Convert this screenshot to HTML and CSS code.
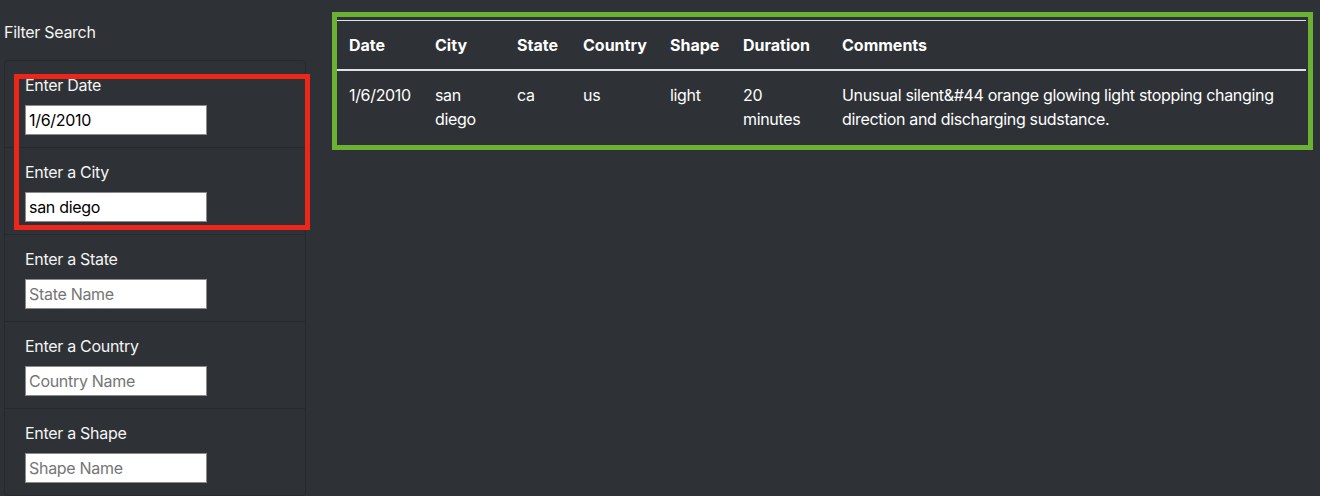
FILE: index.html
```html
<!DOCTYPE html>
<html lang="en">
<head>
<meta charset="utf-8">
<title>UFO Sightings</title>
<link rel="stylesheet" href="styles.css">
</head>
<body>
<div class="page">
  <aside class="sidebar">
    <h2 class="sidebar-title">Filter Search</h2>
    <ul class="filters">
      <li class="filter-item">
        <label class="filter-label" for="date">Enter Date</label>
        <input class="filter-input" id="date" type="text" value="1/6/2010" placeholder="1/1/2010">
      </li>
      <li class="filter-item">
        <label class="filter-label" for="city">Enter a City</label>
        <input class="filter-input" id="city" type="text" value="san diego" placeholder="City Name">
      </li>
      <li class="filter-item">
        <label class="filter-label" for="state">Enter a State</label>
        <input class="filter-input" id="state" type="text" placeholder="State Name">
      </li>
      <li class="filter-item">
        <label class="filter-label" for="country">Enter a Country</label>
        <input class="filter-input" id="country" type="text" placeholder="Country Name">
      </li>
      <li class="filter-item">
        <label class="filter-label" for="shape">Enter a Shape</label>
        <input class="filter-input" id="shape" type="text" placeholder="Shape Name">
      </li>
    </ul>
    <div class="highlight-red"></div>
  </aside>
  <main class="content">
    <div class="table-frame">
      <table class="ufo-table">
        <thead>
          <tr>
            <th class="c-date">Date</th>
            <th class="c-city">City</th>
            <th class="c-state">State</th>
            <th class="c-country">Country</th>
            <th class="c-shape">Shape</th>
            <th class="c-duration">Duration</th>
            <th class="c-comments">Comments</th>
          </tr>
        </thead>
        <tbody>
          <tr>
            <td>1/6/2010</td>
            <td>san diego</td>
            <td>ca</td>
            <td>us</td>
            <td>light</td>
            <td>20 minutes</td>
            <td>Unusual silent&amp;#44 orange glowing light stopping changing direction and discharging sudstance.</td>
          </tr>
        </tbody>
      </table>
    </div>
  </main>
</div>
</body>
</html>
```
FILE: styles.css
```css
* { box-sizing: border-box; }

html, body {
  margin: 0;
  padding: 0;
  background: #2e3236;
  color: #ffffff;
  font-family: "Inter", "Liberation Sans", sans-serif;
  font-size: 16px;
  line-height: 24px;
  height: 496px;
  overflow: hidden;
}

.page {
  display: flex;
  align-items: flex-start;
  padding-left: 4px;
}

.sidebar {
  position: relative;
  width: 302px;
  flex: 0 0 302px;
}

.sidebar-title {
  margin: 0;
  padding-top: 20px;
  margin-bottom: 16px;
  font-size: 16px;
  font-weight: normal;
  line-height: 24px;
  letter-spacing: -0.3px;
  color: #f4f4f4;
}

.filters {
  list-style: none;
  margin: 0;
  padding: 0;
  border: 1px solid #27292d;
  border-radius: 4px;
}

.filter-item {
  padding: 12px 20px;
  border-top: 1px solid #27292d;
}

.filter-item:first-child {
  border-top: none;
}

.filter-label {
  display: block;
  margin-bottom: 8px;
  line-height: 24px;
  letter-spacing: -0.3px;
  color: #f4f4f4;
}

.filter-input {
  display: block;
  width: 182px;
  height: 30px;
  margin: 0;
  padding: 0 3px;
  border: 1px solid #8a8a8a;
  background: #ffffff;
  color: #000000;
  font-family: inherit;
  font-size: 16px;
  letter-spacing: -0.3px;
  outline: none;
}

.filter-input::placeholder {
  color: #757575;
}

.highlight-red {
  position: absolute;
  left: 10px;
  top: 74px;
  width: 296px;
  height: 156px;
  border: 5px solid #ee2619;
  pointer-events: none;
}

.content {
  margin-left: 26px;
}

.table-frame {
  margin-top: 12px;
  width: 981px;
  border: 5px solid #6cb134;
  padding: 3px 2px 2px 0;
}

.ufo-table {
  width: 969px;
  border-collapse: collapse;
  table-layout: fixed;
  color: #ffffff;
}

.ufo-table th,
.ufo-table td {
  padding: 12px;
  text-align: left;
  vertical-align: top;
  line-height: 24px;
  border-top: 1px solid #dee2e6;
}

.ufo-table td {
  letter-spacing: -0.33px;
}

.ufo-table th {
  font-weight: bold;
  border-bottom: 2px solid #dee2e6;
}

.c-date { width: 86px; }
.c-city { width: 82px; }
.c-state { width: 66px; }
.c-country { width: 87px; }
.c-shape { width: 73px; }
.c-duration { width: 99px; }
```
